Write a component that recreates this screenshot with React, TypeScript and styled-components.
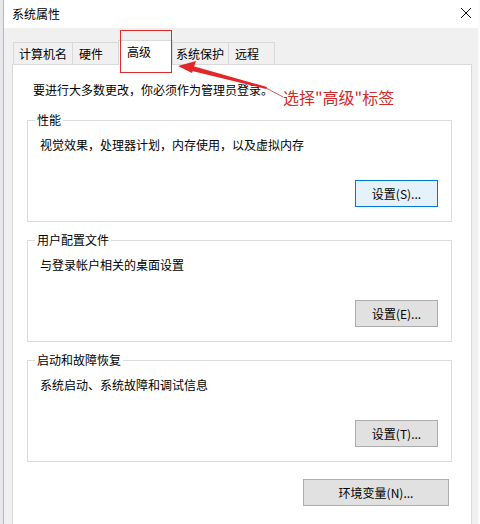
import React from 'react';
import styled, { createGlobalStyle } from 'styled-components';

const GlobalStyle = createGlobalStyle`
  html, body {
    margin: 0;
    padding: 0;
    background: #ffffff;
  }
  body {
    font-family: "Noto Sans CJK SC", "Noto Sans", "Liberation Sans", sans-serif;
    font-size: 12px;
    color: #000;
  }
`;

const Screen = styled.div`
  position: relative;
  display: flex;
  width: 480px;
  height: 524px;
  overflow: hidden;
`;

const BackWindowEdge = styled.div`
  width: 3px;
  background: #e7e8ec;
  border-right: 1px solid #b4b7bd;
`;

const RightEdge = styled.div`
  width: 2px;
  background: #fbfbfb;
`;

const Dialog = styled.div`
  flex: 1;
  display: flex;
  flex-direction: column;
  background: #f0f0f0;
`;

const TitleBar = styled.div`
  height: 28px;
  display: flex;
  align-items: center;
  justify-content: space-between;
  padding: 0 6px 0 8px;
  background: #ffffff;
  box-sizing: border-box;
`;

const Title = styled.span`
  font-size: 12px;
  line-height: 16px;
  margin-top: -1px;
`;

const CloseButton = styled.div`
  width: 12px;
  height: 12px;
  margin-top: -2px;
  display: flex;
`;

const Body = styled.div`
  flex: 1;
  display: flex;
  flex-direction: column;
  padding: 12px 6px 0 8px;
`;

const TabRow = styled.div`
  display: flex;
  align-items: flex-end;
  padding-left: 1px;
  margin-bottom: -1px;
  position: relative;
  z-index: 1;
`;

const Tab = styled.div<{ $w: number; $pl: number; $active?: boolean }>`
  box-sizing: border-box;
  width: ${(p) => p.$w}px;
  height: ${(p) => (p.$active ? 25 : 22)}px;
  margin-bottom: ${(p) => (p.$active ? 0 : 1)}px;
  margin-left: -1px;
  padding: 3px 0 0 ${(p) => p.$pl}px;
  line-height: 16px;
  font-size: 12px;
  white-space: nowrap;
  border: 1px solid #d9d9d9;
  border-bottom: none;
  background: ${(p) => (p.$active ? '#ffffff' : '#f0f0f0')};
  position: relative;
  z-index: ${(p) => (p.$active ? 2 : 1)};

  &:first-child {
    margin-left: 0;
  }
`;

const Panel = styled.div`
  flex: 1;
  display: flex;
  flex-direction: column;
  background: #ffffff;
  border: 1px solid #d9d9d9;
  border-bottom: none;
  padding: 17px 19px 0 14px;
`;

const Intro = styled.div`
  line-height: 16px;
  margin-left: 6px;
  margin-bottom: 14px;
`;

const Group = styled.fieldset`
  display: flex;
  flex-direction: column;
  margin: 0 0 10px 0;
  padding: 9px 13px 14px 12px;
  border: 1px solid #dcdcdc;
  min-width: 0;
`;

const Legend = styled.legend`
  padding: 0 2px;
  margin-left: -5px;
  line-height: 16px;
  font-size: 12px;
`;

const Desc = styled.div`
  line-height: 16px;
`;

const Button = styled.button<{ $focused?: boolean; $w?: number }>`
  box-sizing: border-box;
  width: ${(p) => p.$w ?? 83}px;
  height: 27px;
  align-self: flex-end;
  margin-top: 27px;
  padding: 0;
  font-family: inherit;
  font-size: 12px;
  color: #000;
  border: 1px solid ${(p) => (p.$focused ? '#0078d7' : '#adadad')};
  background: ${(p) => (p.$focused ? '#e5f1fb' : '#e1e1e1')};
`;

const FooterRow = styled.div`
  display: flex;
  justify-content: flex-end;
  margin-top: 7px;
  padding-right: 3px;
`;

const FooterButton = styled(Button)`
  margin-top: 0;
`;

/* red callout drawn on top of the dialog */
const HighlightBox = styled.div`
  position: absolute;
  left: 120px;
  top: 30px;
  width: 50px;
  height: 41px;
  border: 1px solid #e12b2b;
  z-index: 5;
`;

const ArrowLayer = styled.svg`
  position: absolute;
  left: 0;
  top: 0;
  z-index: 5;
  pointer-events: none;
`;

const CalloutText = styled.div`
  position: absolute;
  left: 283px;
  top: 86px;
  font-size: 16px;
  line-height: 22px;
  color: #d42a2a;
  white-space: nowrap;
  z-index: 5;
`;

const tabs = [
  { label: '计算机名', w: 60, pl: 5 },
  { label: '硬件', w: 47, pl: 6 },
  { label: '高级', w: 55, pl: 8, active: true },
  { label: '系统保护', w: 57, pl: 3 },
  { label: '远程', w: 47, pl: 6 },
];

const groups = [
  { title: '性能', desc: '视觉效果，处理器计划，内存使用，以及虚拟内存', button: '设置(S)...', focused: true },
  { title: '用户配置文件', desc: '与登录帐户相关的桌面设置', button: '设置(E)...' },
  { title: '启动和故障恢复', desc: '系统启动、系统故障和调试信息', button: '设置(T)...' },
];

export default function App() {
  return (
    <>
      <GlobalStyle />
      <Screen>
        <BackWindowEdge />
        <Dialog>
          <TitleBar>
            <Title>系统属性</Title>
            <CloseButton>
              <svg width="12" height="12" viewBox="0 0 12 12">
                <path d="M1 1 L11 11 M11 1 L1 11" stroke="#111" strokeWidth="1" fill="none" />
              </svg>
            </CloseButton>
          </TitleBar>
          <Body>
            <TabRow>
              {tabs.map((t) => (
                <Tab key={t.label} $w={t.w} $pl={t.pl} $active={t.active}>
                  {t.label}
                </Tab>
              ))}
            </TabRow>
            <Panel>
              <Intro>要进行大多数更改，你必须作为管理员登录。</Intro>
              {groups.map((g) => (
                <Group key={g.title}>
                  <Legend>{g.title}</Legend>
                  <Desc>{g.desc}</Desc>
                  <Button $focused={g.focused}>{g.button}</Button>
                </Group>
              ))}
              <FooterRow>
                <FooterButton $w={146}>环境变量(N)...</FooterButton>
              </FooterRow>
            </Panel>
          </Body>
        </Dialog>
        <RightEdge />

        <HighlightBox />
        <ArrowLayer width="480" height="524" viewBox="0 0 480 524">
          <polygon points="178,66 196,61 192,73" fill="#e3262a" />
          <polygon points="191,65.5 190,70.5 266,89 267,87" fill="#e3262a" />
          <line x1="266" y1="88" x2="283" y2="97" stroke="#e3262a" strokeWidth="0.8" />
        </ArrowLayer>
        <CalloutText>选择"高级"标签</CalloutText>
      </Screen>
    </>
  );
}
